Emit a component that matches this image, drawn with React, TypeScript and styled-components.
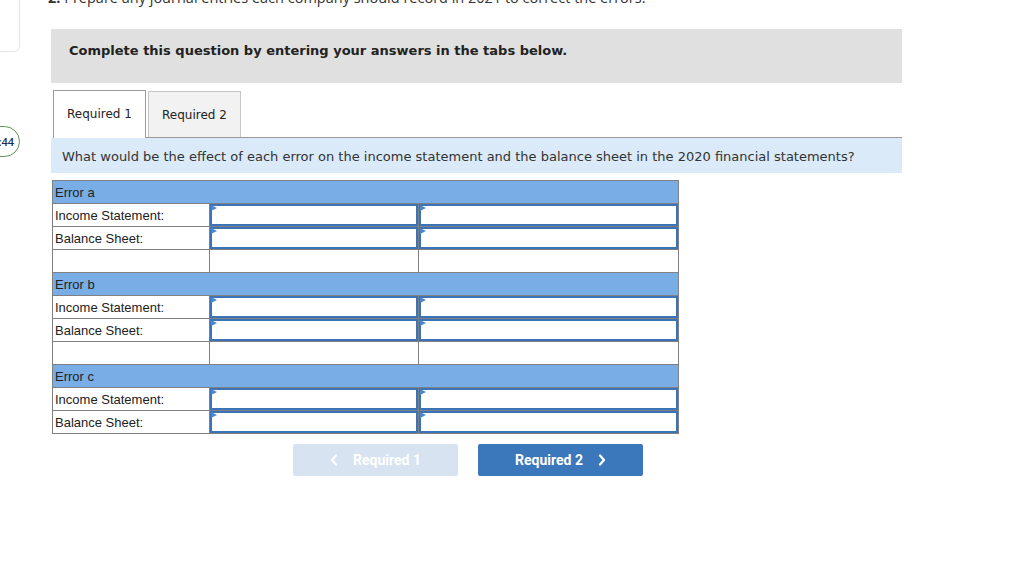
import styled, { createGlobalStyle } from "styled-components";

const GlobalStyle = createGlobalStyle`
    html, body {
        margin: 0;
        padding: 0;
        background: #ffffff;
        overflow: hidden;
    }
`;

const StyledPage = styled.div`
    display: flex;
    width: 1026px;
    height: 561px;
    overflow: hidden;
`;

const StyledRail = styled.aside`
    width: 20px;
    flex-shrink: 0;
    display: flex;
    flex-direction: column;
    align-items: flex-end;
`;

const StyledRailCard = styled.div`
    width: 60px;
    height: 80px;
    margin-top: -30px;
    border: 1px solid #e6e6e6;
    border-radius: 6px;
    background: #ffffff;
`;

const StyledTimer = styled.div`
    margin-top: 74px;
    width: 56px;
    height: 31px;
    border: 1.5px solid #5b9a52;
    border-radius: 16px;
    display: flex;
    align-items: center;
    justify-content: flex-end;
    padding-right: 5px;
    box-sizing: border-box;
    font-family: "Open Sans", sans-serif;
    font-size: 11px;
    font-weight: 600;
    color: #14305e;
`;

const StyledMain = styled.main`
    margin-left: 31px;
    width: 851px;
    display: flex;
    flex-direction: column;
`;

const StyledPrompt = styled.p`
    margin: -12px 0 0 -3px;
    font-family: "Open Sans", sans-serif;
    font-size: 14.5px;
    line-height: 20px;
    color: #333333;
    white-space: nowrap;

    b {
        font-weight: 700;
    }
`;

const StyledInstruction = styled.div`
    margin-top: 21px;
    height: 54px;
    box-sizing: border-box;
    background: #e0e0e0;
    padding: 13px 0 0 18px;
    font-family: Verdana, "DejaVu Sans", sans-serif;
    font-size: 13px;
    line-height: 18px;
    font-weight: 700;
    color: #222222;
`;

const StyledTabBar = styled.div`
    margin-top: 7px;
    display: flex;
    align-items: flex-end;
    padding-left: 2px;
`;

const StyledTab = styled.div<{ $active?: boolean }>`
    width: 93px;
    height: ${(p) => (p.$active ? "48px" : "46px")};
    box-sizing: border-box;
    display: flex;
    align-items: center;
    justify-content: center;
    padding-bottom: ${(p) => (p.$active ? "1px" : "0")};
    border: 1px solid ${(p) => (p.$active ? "#9a9a9a" : "#c6c6c6")};
    border-bottom: none;
    background: ${(p) => (p.$active ? "#ffffff" : "#f2f2f2")};
    font-family: Verdana, "DejaVu Sans", sans-serif;
    font-size: 12px;
    color: #222222;
`;

const StyledTabRest = styled.div`
    flex: 1;
    display: flex;
    padding-left: 2px;
    border-bottom: 1px solid #9a9a9a;
`;

const StyledQuestion = styled.div`
    height: 35px;
    background: #daeaf8;
    display: flex;
    align-items: center;
    padding: 1px 0 0 11px;
    box-sizing: border-box;
    font-family: Verdana, "DejaVu Sans", sans-serif;
    font-size: 13px;
    color: #333333;
`;

const StyledTable = styled.table`
    margin: 7px 0 0 1px;
    width: 626px;
    border-collapse: collapse;
    table-layout: fixed;
    font-family: Arial, "Liberation Sans", sans-serif;
    font-size: 13px;
    color: #222222;

    td {
        border: 1px solid #808080;
        height: 22px;
        padding: 0;
        box-sizing: content-box;
    }
`;

const StyledHeadCell = styled.td`
    background: #79ade5;
    padding: 0 2px !important;
`;

const StyledLabelCell = styled.td`
    padding: 0 2px !important;
`;

const StyledInputCell = styled.td`
    position: relative;
`;

const StyledInput = styled.div`
    position: relative;
    height: 22px;
    box-sizing: border-box;
    border: 2px solid #3b73b9;
    background: #ffffff;
`;

const StyledFlag = styled.span`
    position: absolute;
    top: -1px;
    left: -1px;
    width: 0;
    height: 0;
    border-left: 6px solid #4a86cf;
    border-top: 3px solid transparent;
    border-bottom: 3px solid transparent;
`;

const StyledNav = styled.div`
    margin: 10px 0 0 242px;
    display: flex;
    gap: 20px;
`;

const StyledNavButton = styled.button<{ $disabled?: boolean }>`
    width: 165px;
    height: 32px;
    border: none;
    border-radius: 2px;
    display: flex;
    align-items: center;
    justify-content: center;
    gap: 15px;
    background: ${(p) => (p.$disabled ? "#d7e3f1" : "#3a77bb")};
    color: #ffffff;
    font-family: Roboto, "Liberation Sans", sans-serif;
    font-size: 14px;
    font-weight: 700;
    padding: 0;
    cursor: ${(p) => (p.$disabled ? "default" : "pointer")};
`;

function Chevron({ dir }: { dir: "left" | "right" }) {
    return (
        <svg width="8" height="12" viewBox="0 0 8 12" fill="none">
            <path
                d={dir === "left" ? "M6 1.5 L2 6 L6 10.5" : "M2 1.5 L6 6 L2 10.5"}
                stroke="#ffffff"
                strokeWidth="2.2"
                strokeLinecap="round"
                strokeLinejoin="round"
            />
        </svg>
    );
}

function InputCell() {
    return (
        <StyledInputCell>
            <StyledInput>
                <StyledFlag />
            </StyledInput>
        </StyledInputCell>
    );
}

const errors = ["a", "b", "c"];

export default function App() {
    return (
        <>
            <GlobalStyle />
            <StyledPage>
                <StyledRail>
                    <StyledRailCard />
                    <StyledTimer>:44</StyledTimer>
                </StyledRail>
                <StyledMain>
                    <StyledPrompt>
                        <b>2.</b> Prepare any journal entries each company should record in 2021 to correct the errors.
                    </StyledPrompt>
                    <StyledInstruction>
                        Complete this question by entering your answers in the tabs below.
                    </StyledInstruction>
                    <StyledTabBar>
                        <StyledTab $active>Required 1</StyledTab>
                        <StyledTabRest>
                            <StyledTab>Required 2</StyledTab>
                        </StyledTabRest>
                    </StyledTabBar>
                    <StyledQuestion>
                        What would be the effect of each error on the income statement and the balance sheet in the 2020 financial statements?
                    </StyledQuestion>
                    <StyledTable>
                        <colgroup>
                            <col style={{ width: 157 }} />
                            <col style={{ width: 209 }} />
                            <col style={{ width: 260 }} />
                        </colgroup>
                        <tbody>
                            {errors.map((e, i) => (
                                <>
                                    <tr key={`h${e}`}>
                                        <StyledHeadCell colSpan={3}>Error {e}</StyledHeadCell>
                                    </tr>
                                    <tr key={`is${e}`}>
                                        <StyledLabelCell>Income Statement:</StyledLabelCell>
                                        <InputCell />
                                        <InputCell />
                                    </tr>
                                    <tr key={`bs${e}`}>
                                        <StyledLabelCell>Balance Sheet:</StyledLabelCell>
                                        <InputCell />
                                        <InputCell />
                                    </tr>
                                    {i < errors.length - 1 && (
                                        <tr key={`sp${e}`}>
                                            <td />
                                            <td />
                                            <td />
                                        </tr>
                                    )}
                                </>
                            ))}
                        </tbody>
                    </StyledTable>
                    <StyledNav>
                        <StyledNavButton $disabled>
                            <Chevron dir="left" />
                            Required 1
                        </StyledNavButton>
                        <StyledNavButton>
                            Required 2
                            <Chevron dir="right" />
                        </StyledNavButton>
                    </StyledNav>
                </StyledMain>
            </StyledPage>
        </>
    );
}
